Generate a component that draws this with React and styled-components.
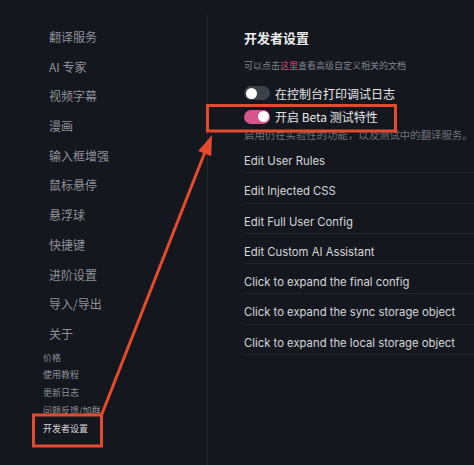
import styled, { createGlobalStyle } from "styled-components";

const GlobalStyle = createGlobalStyle`
  html, body {
    margin: 0;
    padding: 0;
    background: #14171d;
  }
  * {
    box-sizing: border-box;
  }
`;

const mainNav = [
  "翻译服务",
  "AI 专家",
  "视频字幕",
  "漫画",
  "输入框增强",
  "鼠标悬停",
  "悬浮球",
  "快捷键",
  "进阶设置",
  "导入/导出",
  "关于",
];

const subNav = ["价格", "使用教程", "更新日志", "问题反馈/加群", "开发者设置"];

const actions = [
  "Edit User Rules",
  "Edit Injected CSS",
  "Edit Full User Config",
  "Edit Custom AI Assistant",
  "Click to expand the final config",
  "Click to expand the sync storage object",
  "Click to expand the local storage object",
];

export default function App() {
  return (
    <>
      <GlobalStyle />
      <Page>
        <Sidebar>
          {mainNav.map((item) => (
            <NavItem key={item}>{item}</NavItem>
          ))}
          {subNav.map((item) => (
            <SubItem key={item} $active={item === "开发者设置"}>
              {item}
            </SubItem>
          ))}
        </Sidebar>
        <Main>
          <Title>开发者设置</Title>
          <Hint>
            可以点击<a href="#docs">这里</a>查看高级自定义相关的文档
          </Hint>
          <ToggleRow>
            <Switch />
            <span>在控制台打印调试日志</span>
          </ToggleRow>
          <ToggleRow $tight>
            <Switch $on />
            <span>开启 Beta 测试特性</span>
          </ToggleRow>
          <Desc>启用仍在实验性的功能，以及测试中的翻译服务。</Desc>
          <ActionList>
            {actions.map((a) => (
              <ActionRow key={a}>{a}</ActionRow>
            ))}
          </ActionList>
        </Main>
        <Annotation viewBox="0 0 474 465">
          <rect x="207.5" y="105.5" width="188" height="25.5" />
          <rect x="33.5" y="415" width="68" height="31" />
          <line x1="101.5" y1="415" x2="205" y2="152" />
          <polygon points="212,135 211.2,156.2 198.2,151" />
        </Annotation>
      </Page>
    </>
  );
}

const Page = styled.div`
  position: relative;
  width: 474px;
  height: 465px;
  overflow: hidden;
  display: flex;
  background: #14171d;
  font-family: "Noto Sans CJK SC", "Liberation Sans", sans-serif;
`;

const Sidebar = styled.nav`
  width: 208px;
  flex-shrink: 0;
  margin-top: 15px;
  padding-top: 7px;
  border-right: 1px solid #23262c;
  display: flex;
  flex-direction: column;
`;

const NavItem = styled.div`
  height: 29.7px;
  line-height: 29.7px;
  padding-left: 49px;
  font-size: 12px;
  color: #8e9299;
  white-space: nowrap;
`;

const SubItem = styled.div`
  height: 17.8px;
  line-height: 17.8px;
  padding-left: 43px;
  font-size: 9px;
  color: ${(p) => (p.$active ? "#d4d5d8" : "#8e9299")};
  white-space: nowrap;
`;

const Main = styled.main`
  flex: 1;
  padding: 28px 0 0 36px;
  display: flex;
  flex-direction: column;
`;

const Title = styled.h2`
  margin: 0;
  height: 20px;
  line-height: 20px;
  font-size: 13px;
  font-weight: 700;
  color: #eceef0;
`;

const Hint = styled.p`
  margin: 11px 0 0;
  height: 14px;
  line-height: 14px;
  font-size: 9px;
  color: #80848b;
  a {
    color: #e2457f;
    text-decoration: none;
  }
`;

const ToggleRow = styled.div`
  margin-top: ${(p) => (p.$tight ? "0" : "8px")};
  height: ${(p) => (p.$tight ? "23px" : "24px")};
  display: flex;
  align-items: center;
  gap: 5px;
  font-size: 12px;
  color: #e6e7e9;
  white-space: nowrap;
`;

const Switch = styled.span`
  position: relative;
  width: 26px;
  height: 14px;
  border-radius: 7px;
  flex-shrink: 0;
  background: ${(p) => (p.$on ? "#d6548c" : "#3a414b")};
  &::after {
    content: "";
    position: absolute;
    top: 1.5px;
    left: ${(p) => (p.$on ? "13.5px" : "1.5px")};
    width: 11px;
    height: 11px;
    border-radius: 50%;
    background: #ffffff;
  }
`;

const Desc = styled.p`
  margin: 0;
  height: 14px;
  line-height: 14px;
  font-size: 10.4px;
  color: #6f737a;
  white-space: nowrap;
`;

const ActionList = styled.div`
  margin-top: 1px;
  display: flex;
  flex-direction: column;
`;

const ActionRow = styled.div`
  padding: 10px 0 3.3px;
  line-height: 16px;
  font-family: "Inter", "Liberation Sans", sans-serif;
  font-size: 11.3px;
  color: #d6d7da;
  border-bottom: 1px solid #22252c;
  white-space: nowrap;
`;

const Annotation = styled.svg`
  position: absolute;
  left: 0;
  top: 0;
  width: 474px;
  height: 465px;
  pointer-events: none;
  rect {
    fill: none;
    stroke: #e54a2e;
    stroke-width: 3;
  }
  line {
    stroke: #e54a2e;
    stroke-width: 3;
  }
  polygon {
    fill: #e54a2e;
  }
`;
